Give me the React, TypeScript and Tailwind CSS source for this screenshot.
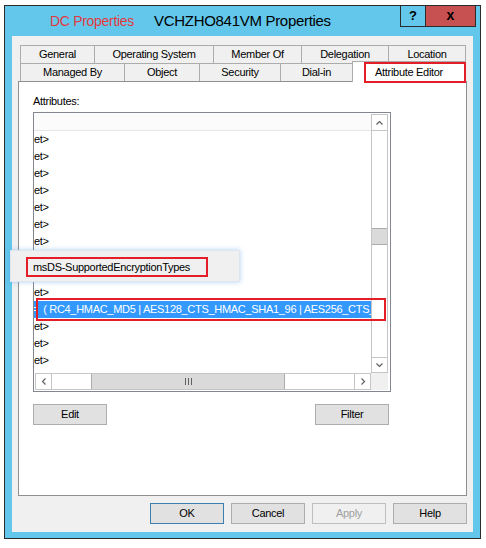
import React from 'react';

const tabsTop = [
  { label: 'General', w: 'w-[74px]', last: false },
  { label: 'Operating System', w: 'w-[119px]', last: false },
  { label: 'Member Of', w: 'w-[88px]', last: false },
  { label: 'Delegation', w: 'w-[87px]', last: false },
  { label: 'Location', w: 'w-[78px]', last: true },
];

const tabsBottom = [
  { label: 'Managed By', w: 'w-[104px]' },
  { label: 'Object', w: 'w-[75px]' },
  { label: 'Security', w: 'w-[81px]' },
  { label: 'Dial-in', w: 'w-[72px]' },
];

// rows of the attribute list; null marks the selected row
const rows: (string | null)[] = [
  'et>', 'et>', 'et>', 'et>', 'et>', 'et>', 'et>',
  'et>', 'et>', 'et>', null, 'et>', 'et>', 'et>', 'et>',
];

const Chevron = ({ dir }: { dir: 'up' | 'down' | 'left' | 'right' }) => {
  const d =
    dir === 'up'
      ? 'M0.5 4.5 L3.5 1.5 L6.5 4.5'
      : dir === 'down'
      ? 'M0.5 1.5 L3.5 4.5 L6.5 1.5'
      : dir === 'left'
      ? 'M4.5 0.5 L1.5 3.5 L4.5 6.5'
      : 'M1.5 0.5 L4.5 3.5 L1.5 6.5';
  const horiz = dir === 'up' || dir === 'down';
  return (
    <svg width={horiz ? 7 : 6} height={horiz ? 6 : 7} viewBox={horiz ? '0 0 7 6' : '0 0 6 7'}>
      <path d={d} stroke="#606060" strokeWidth="1.2" fill="none" />
    </svg>
  );
};

const Button = ({ label, variant }: { label: string; variant?: 'default' | 'disabled' }) => (
  <div
    className={`w-[74px] h-[21px] flex items-center justify-center border text-[11px] tracking-[-0.3px] ${
      variant === 'default'
        ? 'border-[#3c7fb1] bg-[#e1e1e1] text-black'
        : variant === 'disabled'
        ? 'border-[#bfbfbf] bg-[#f0f0f0] text-[#a0a0a0]'
        : 'border-[#adadad] bg-[#e1e1e1] text-black'
    }`}
  >
    {label}
  </div>
);

export default function App() {
  return (
    <div className="relative w-[486px] h-[548px] overflow-hidden bg-white pl-[4px] pt-[5px] font-['Liberation_Sans',Arial,sans-serif]">
      {/* Window frame */}
      <div className="w-[477px] h-[534px] border border-[#2b2b2b] bg-[#62c7ea] flex flex-col">
        {/* Title bar */}
        <div className="h-[30px] flex items-start">
          <span className="ml-[45px] mt-[5px] leading-[20px] text-[14px] tracking-[-0.3px] text-[#e2393f]">
            DC Properties
          </span>
          <span className="ml-[20px] mt-[5px] leading-[20px] text-[15px] tracking-[-0.3px] text-black">
            VCHZHO841VM Properties
          </span>
          <div className="ml-auto mr-[4px] -mt-px flex h-[22px]">
            <div className="w-[26px] h-full border border-[#2b2b2b] flex items-center justify-center text-[13px] font-bold text-black">
              ?
            </div>
            <div className="w-[50px] h-full border border-l-0 border-[#2b2b2b] bg-[#c75050] flex items-center justify-center text-[14px] font-bold text-black leading-none pb-[2px]">
              x
            </div>
          </div>
        </div>

        {/* Client area */}
        <div className="mx-[7px] h-[496px] bg-[#f0f0f0] pt-[9px] pl-[6px]">
          <div className="w-[449px]">
            {/* Tab rows */}
            <div className="flex pl-[2px] h-[18px]">
              {tabsTop.map((t) => (
                <div
                  key={t.label}
                  className={`${t.w} h-full flex items-center justify-center border-t border-l ${
                    t.last ? 'border-r' : ''
                  } border-[#acacac] bg-[#f0f0f0] text-[11px] tracking-[-0.3px] text-black`}
                >
                  {t.label}
                </div>
              ))}
            </div>
            <div className="flex items-end pl-[2px] h-[18px]">
              {tabsBottom.map((t) => (
                <div
                  key={t.label}
                  className={`${t.w} h-full flex items-center justify-center border-t border-l border-[#acacac] bg-[#f0f0f0] text-[11px] tracking-[-0.3px] text-black`}
                >
                  {t.label}
                </div>
              ))}
              <div className="relative z-10 w-[114px] h-[21px] -mb-px flex items-center justify-center border-t border-l border-r border-[#acacac] bg-white text-[11px] tracking-[-0.3px] text-black">
                Attribute Editor
              </div>
            </div>

            {/* Tab panel */}
            <div className="h-[415px] border border-[#8e8f8f] bg-white">
              <div className="ml-[14px] mt-[12px] h-[14px] leading-[14px] text-[11px] tracking-[-0.3px] text-black">
                Attributes:
              </div>

              {/* List box */}
              <div className="ml-[14px] mt-[4px] w-[358px] h-[280px] border border-[#828790] bg-white flex flex-col">
                <div className="flex h-[260px]">
                  <div className="w-[337px] h-full overflow-hidden">
                    <div className="h-[18px] bg-[#fbfbfb] border-b border-[#e5e5e5]" />
                    {rows.map((r, i) =>
                      r === null ? (
                        <div
                          key={i}
                          className="h-[17px] leading-[17px] bg-[#3399ff] text-white text-[11px] tracking-[-0.3px] whitespace-nowrap overflow-hidden flex"
                        >
                          <span className="ml-[-4px]">=</span>
                          <span className="ml-[7px]">
                            ( RC4_HMAC_MD5 | AES128_CTS_HMAC_SHA1_96 | AES256_CTS_HMAC_SHA1_96 )
                          </span>
                        </div>
                      ) : (
                        <div key={i} className="h-[17px] leading-[17px] text-[11px] tracking-[-0.3px] text-black">
                          {r}
                        </div>
                      )
                    )}
                  </div>
                  {/* Vertical scrollbar */}
                  <div className="w-[17px] h-[259px] mt-px border-l border-r border-t border-[#c5c5c5] flex flex-col">
                    <div className="h-[16px] border-b border-[#c5c5c5] flex items-center justify-center">
                      <Chevron dir="up" />
                    </div>
                    <div className="h-[97px]" />
                    <div className="h-[17px] bg-[#dadada] border-y border-[#acacac]" />
                    <div className="h-[112px]" />
                    <div className="h-[16px] border-t border-b border-[#c5c5c5] flex items-center justify-center">
                      <Chevron dir="down" />
                    </div>
                  </div>
                </div>
                {/* Horizontal scrollbar + corner */}
                <div className="flex h-[17px]">
                  <div className="ml-px w-[336px] h-full border border-[#c5c5c5] flex">
                    <div className="w-[16px] h-full border-r border-[#c5c5c5] flex items-center justify-center">
                      <Chevron dir="left" />
                    </div>
                    <div className="w-[39px] h-full" />
                    <div className="w-[194px] h-full bg-[#dadada] border-x border-[#acacac] flex items-center justify-center gap-[2px]">
                      <div className="w-px h-[7px] bg-[#606060]" />
                      <div className="w-px h-[7px] bg-[#606060]" />
                      <div className="w-px h-[7px] bg-[#606060]" />
                    </div>
                    <div className="w-[69px] h-full" />
                    <div className="w-[16px] h-full border-l border-[#c5c5c5] flex items-center justify-center">
                      <Chevron dir="right" />
                    </div>
                  </div>
                  <div className="w-[17px] h-full bg-[#f0f0f0]" />
                </div>
              </div>

              <div className="ml-[14px] mt-[12px] w-[356px] flex justify-between">
                <Button label="Edit" />
                <Button label="Filter" />
              </div>
            </div>

            {/* Dialog buttons */}
            <div className="mt-[7px] flex justify-end gap-[7px]">
              <Button label="OK" variant="default" />
              <Button label="Cancel" />
              <Button label="Apply" variant="disabled" />
              <Button label="Help" />
            </div>
          </div>
        </div>
      </div>

      {/* Attribute name popup */}
      <div className="absolute z-20 left-[10px] top-[250px] w-[230px] h-[32px] bg-[#f0f0f0] border border-[#dde5ee] shadow-[0_0_5px_rgba(80,150,230,0.45)] pl-[15px] pt-[6px]">
        <div className="w-[182px] h-[20px] border-2 border-[#e31e26] pl-[5px] leading-[16px] text-[11px] tracking-[-0.3px] text-black">
          msDS-SupportedEncryptionTypes
        </div>
      </div>

      {/* Highlight marks */}
      <div className="absolute z-20 left-[364px] top-[62px] w-[102px] h-[21px] border-2 border-[#e31e26]" />
      <div className="absolute z-20 left-[36px] top-[298px] w-[350px] h-[23px] border-2 border-[#e31e26]" />
    </div>
  );
}
